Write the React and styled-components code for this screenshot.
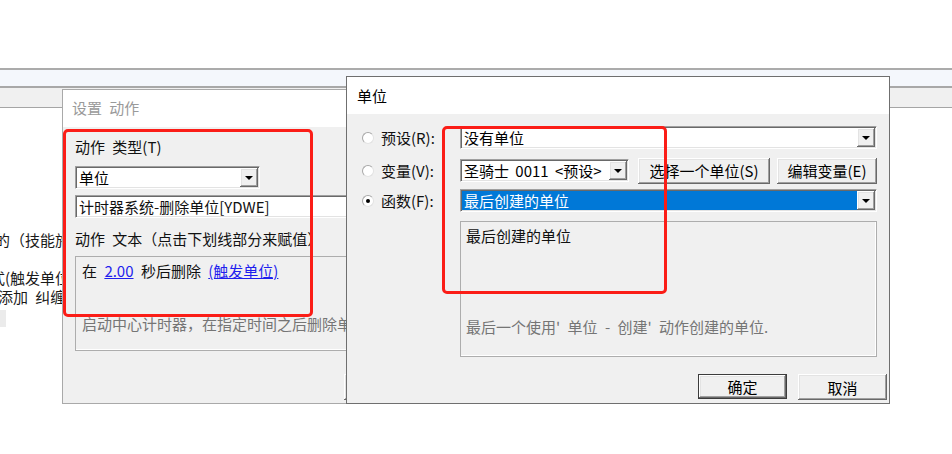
import styled, { createGlobalStyle, css } from "styled-components"

export default function App() {
    return (
        <>
            <GlobalStyle />
            <Desktop>
                <EditorWindow>
                    <MenuBand />
                    <ToolBand />
                    <TriggerText>
                        <TextLine $gap={122} $shift={-5}>的（技能施</TextLine>
                        <TextLine $gap={19} $shift={-10}>式(触发单位</TextLine>
                        <TextLine $gap={0} $shift={-2}>添加 纠缠</TextLine>
                        <StubField />
                    </TriggerText>
                </EditorWindow>

                <ActionDialog>
                    <TitleBar $inactive>设置 动作</TitleBar>
                    <ActionBody>
                        <FieldLabel>动作 类型(T)</FieldLabel>
                        <Combo $width={185} $top={9}>
                            <ComboText>单位</ComboText>
                            <DropButton><Arrow /></DropButton>
                        </Combo>
                        <EditBox>计时器系统-删除单位[YDWE]</EditBox>
                        <FieldLabel $top={11}>动作 文本（点击下划线部分来赋值）</FieldLabel>
                        <TextPanel $top={7} $height={95}>
                            <PanelLine>
                                在 <ParamLink>2.00</ParamLink> 秒后删除 <ParamLink>(触发单位)</ParamLink>
                            </PanelLine>
                            <Hint>启动中心计时器，在指定时间之后删除单位。</Hint>
                        </TextPanel>
                        <ActionFooter>
                            <PushButton $width={89}>确定</PushButton>
                        </ActionFooter>
                    </ActionBody>
                </ActionDialog>

                <UnitDialog>
                    <TitleBar>单位</TitleBar>
                    <UnitBody>
                        <ChoiceRow $top={0}>
                            <Radio />
                            <ChoiceLabel>预设(R):</ChoiceLabel>
                            <Combo>
                                <ComboText>没有单位</ComboText>
                                <DropButton><Arrow /></DropButton>
                            </Combo>
                        </ChoiceRow>
                        <ChoiceRow $top={8} $height={27}>
                            <Radio />
                            <ChoiceLabel>变量(V):</ChoiceLabel>
                            <Combo $width={169}>
                                <ComboText $tight>圣骑士 0011 &lt;预设&gt;</ComboText>
                                <DropButton><Arrow /></DropButton>
                            </Combo>
                            <PushButton $width={132} $gap={9}>选择一个单位(S)</PushButton>
                            <PushButton $width={100} $gap={7}>编辑变量(E)</PushButton>
                        </ChoiceRow>
                        <ChoiceRow $top={5}>
                            <Radio $checked />
                            <ChoiceLabel>函数(F):</ChoiceLabel>
                            <Combo>
                                <ComboText $selected>最后创建的单位</ComboText>
                                <DropButton><Arrow /></DropButton>
                            </Combo>
                        </ChoiceRow>
                        <DescribePanel>
                            <PanelLine>最后创建的单位</PanelLine>
                            <Hint>最后一个使用' 单位 - 创建' 动作创建的单位.</Hint>
                        </DescribePanel>
                    </UnitBody>
                    <UnitFooter>
                        <PushButton $width={89} $default>确定</PushButton>
                        <PushButton $width={89} $gap={11}>取消</PushButton>
                    </UnitFooter>
                </UnitDialog>

                <Highlight $left={63} $top={129} $width={250} $height={188} />
                <Highlight $left={442} $top={126} $width={225} $height={168} />
            </Desktop>
        </>
    )
}

const GlobalStyle = createGlobalStyle`
    html, body {
        margin: 0;
        padding: 0;
        background: #ffffff;
    }
    body {
        font-family: "Noto Sans CJK SC", "Noto Sans", sans-serif;
        font-size: 15px;
        color: #111;
    }
`

const raised = css`
    background: #f0f0f0;
    box-shadow:
        inset -1px -1px 0 #696969,
        inset 1px 1px 0 #ffffff,
        inset -2px -2px 0 #a0a0a0,
        inset 2px 2px 0 #e3e3e3;
`

const sunken = css`
    border: 1px solid;
    border-color: #a0a0a0 #ffffff #ffffff #a0a0a0;
    box-shadow: inset 1px 1px 0 #696969, inset -1px -1px 0 #e3e3e3;
`

const Desktop = styled.div`
    position: relative;
    width: 952px;
    height: 454px;
    overflow: hidden;
    background: #ffffff;
    word-spacing: 4px;
`

const EditorWindow = styled.div`
    display: flex;
    flex-direction: column;
`

const MenuBand = styled.div`
    margin-top: 68px;
    height: 16px;
    background: #f4f7fc;
    border-top: 2px solid #ababab;
    border-bottom: 2px solid #a8a8a8;
`

const ToolBand = styled.div`
    height: 19px;
    background: #f0f0f0;
    border-bottom: 1px solid #a5a5a5;
`

/* only the strip left of the dialogs is ever visible */
const TriggerText = styled.div`
    width: 62px;
    overflow: hidden;
    display: flex;
    flex-direction: column;
    align-items: flex-start;
`

const TextLine = styled.div`
    margin-top: ${p => p.$gap}px;
    margin-left: ${p => p.$shift}px;
    line-height: 19px;
    white-space: nowrap;
    color: #1a1a1a;
`

const StubField = styled.div`
    margin-top: 4px;
    width: 6px;
    height: 17px;
    background: #ebebeb;
`

const Dialog = css`
    position: absolute;
    box-sizing: border-box;
    display: flex;
    flex-direction: column;
    background: #f0f0f0;
`

const ActionDialog = styled.div`
    ${Dialog}
    left: 62px;
    top: 89px;
    width: 420px;
    height: 315px;
    border: 1px solid #a9a9a9;
`

const UnitDialog = styled.div`
    ${Dialog}
    left: 346px;
    top: 76px;
    width: 544px;
    height: 328px;
    border: 1px solid #6f6f6f;
`

const TitleBar = styled.div`
    flex: none;
    height: ${p => (p.$inactive ? 35 : 37)}px;
    display: flex;
    align-items: center;
    padding-left: ${p => (p.$inactive ? 9 : 10)}px;
    padding-bottom: ${p => (p.$inactive ? 2 : 0)}px;
    background: #ffffff;
    color: ${p => (p.$inactive ? "#9a9a9a" : "#000000")};
    font-size: 15px;
`

const ActionBody = styled.div`
    display: flex;
    flex-direction: column;
    align-items: flex-start;
    padding: 10px 0 0 12px;
`

const FieldLabel = styled.div`
    margin-top: ${p => p.$top || 0}px;
    line-height: 20px;
    white-space: nowrap;
`

const Combo = styled.div`
    box-sizing: border-box;
    display: flex;
    margin-top: ${p => p.$top || 0}px;
    width: ${p => (p.$width ? `${p.$width}px` : "auto")};
    flex: ${p => (p.$width ? "none" : 1)};
    height: 23px;
    padding: 1px;
    background: #ffffff;
    ${sunken}
`

const ComboText = styled.div`
    flex: 1;
    min-width: 0;
    padding-left: 2px;
    line-height: 19px;
    white-space: nowrap;
    overflow: hidden;
    word-spacing: ${p => (p.$tight ? "3px" : "inherit")};
    background: ${p => (p.$selected ? "#0078d7" : "transparent")};
    color: ${p => (p.$selected ? "#ffffff" : "#000000")};
`

const DropButton = styled.div`
    flex: none;
    width: 18px;
    display: flex;
    align-items: center;
    justify-content: center;
    ${raised}
`

const Arrow = styled.span`
    width: 0;
    height: 0;
    border-left: 4px solid transparent;
    border-right: 4px solid transparent;
    border-top: 4px solid #000000;
`

const EditBox = styled.div`
    box-sizing: border-box;
    margin-top: 6px;
    width: 380px;
    height: 23px;
    padding: 1px 3px;
    line-height: 19px;
    background: #ffffff;
    white-space: nowrap;
    ${sunken}
`

const TextPanel = styled.div`
    box-sizing: border-box;
    margin-top: ${p => p.$top}px;
    width: 380px;
    height: ${p => p.$height}px;
    display: flex;
    flex-direction: column;
    justify-content: space-between;
    padding: 4px 6px 16px;
    border: 1px solid #adadad;
    box-shadow: inset -1px -1px 0 #ffffff;
`

const PanelLine = styled.div`
    line-height: 20px;
    white-space: nowrap;
`

const ParamLink = styled.span`
    color: #1f1fee;
    text-decoration: underline;
`

const Hint = styled.div`
    line-height: 20px;
    white-space: nowrap;
    color: #757575;
`

const ActionFooter = styled.div`
    margin-top: 23px;
    padding-left: 269px;
`

const UnitBody = styled.div`
    display: flex;
    flex-direction: column;
    padding: 12px 12px 0 15px;
`

const ChoiceRow = styled.div`
    display: flex;
    align-items: center;
    margin-top: ${p => p.$top}px;
    height: ${p => p.$height || 23}px;
`

const Radio = styled.span`
    box-sizing: border-box;
    flex: none;
    width: 12px;
    height: 12px;
    margin-right: 7px;
    border-radius: 50%;
    background: #ffffff;
    border: 1px solid;
    border-color: #a7a7a7 #e2e2e2 #e2e2e2 #a7a7a7;
    display: flex;
    align-items: center;
    justify-content: center;

    &::after {
        content: "";
        width: 4px;
        height: 4px;
        border-radius: 50%;
        background: ${p => (p.$checked ? "#000000" : "transparent")};
    }
`

const ChoiceLabel = styled.span`
    flex: none;
    width: 79px;
    white-space: nowrap;
    word-spacing: 0;
`

const PushButton = styled.button`
    flex: none;
    box-sizing: border-box;
    width: ${p => p.$width}px;
    height: ${p => (p.$default ? 25 : 26)}px;
    margin-left: ${p => p.$gap || 0}px;
    padding: 0;
    font: inherit;
    color: #000000;
    border: none;
    white-space: nowrap;
    ${raised}
    ${p =>
        p.$default &&
        css`
            border: 1px solid #3c3c3c;
        `}
`

const DescribePanel = styled.div`
    box-sizing: border-box;
    margin: 9px 0 0 98px;
    height: 136px;
    display: flex;
    flex-direction: column;
    justify-content: space-between;
    padding: 4px 5px 19px;
    border: 1px solid #adadad;
    box-shadow: inset -1px -1px 0 #ffffff;
`

const UnitFooter = styled.div`
    display: flex;
    justify-content: flex-end;
    margin-top: 17px;
    padding-right: 2px;
`

const Highlight = styled.div`
    position: absolute;
    left: ${p => p.$left}px;
    top: ${p => p.$top}px;
    width: ${p => p.$width}px;
    height: ${p => p.$height}px;
    box-sizing: border-box;
    border: 3px solid #fb1d17;
    border-radius: 5px;
    pointer-events: none;
`
